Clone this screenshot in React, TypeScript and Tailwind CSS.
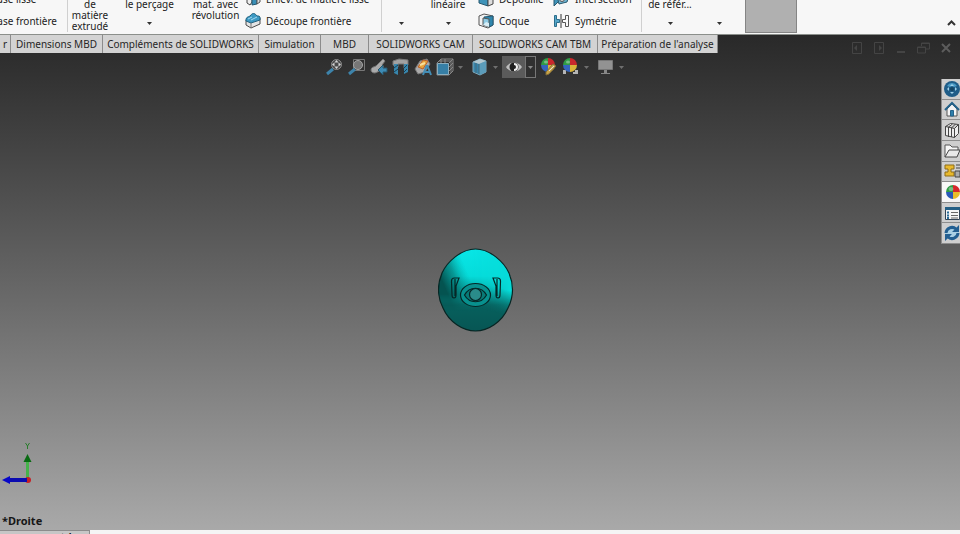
import type { ReactNode } from 'react'

const hudSep = <Caret className="fill-[#6f6f6f]" />

function Caret({ className }: { className: string }) {
  return (
    <svg width="5" height="3" viewBox="0 0 5 3" className={className}>
      <path d="M0 0h5L2.5 3z" />
    </svg>
  )
}

/* ===== Ribbon ===== */

function LargeButton({ lines, arrow, className }: { lines: string[]; arrow?: boolean; className: string }) {
  return (
    <button
      aria-label={lines.length ? undefined : 'Options'}
      className={`-mt-px flex shrink-0 flex-col items-center leading-[11px] ${arrow ? 'h-[26px]' : ''} ${className}`}
    >
      {lines.map(l => <span key={l} className="whitespace-nowrap">{l}</span>)}
      {arrow && <Caret className="mt-auto fill-[#333]" />}
    </button>
  )
}

function SmallButton({ icon, label }: { icon: ReactNode; label: string }) {
  return (
    <button className="flex h-[22px] shrink-0 items-center gap-[5px] whitespace-nowrap">
      {icon}
      <span>{label}</span>
    </button>
  )
}

function SmallColumn({ className, children }: { className: string; children: ReactNode }) {
  return (
    <div className={`flex h-[34px] shrink-0 flex-col items-start justify-end pb-0.5 ${className}`}>
      {children}
    </div>
  )
}

function LoftIcon() {
  return (
    <svg width="16" height="16" viewBox="0 0 16 16" className="shrink-0">
      <path d="M2 5l5-3v9l-2 3-3-2z" fill="#eee" stroke="#444" />
      <path d="M7 2l5 3v8l-5 1z" fill="#3a8fb7" stroke="#24566e" />
      <path d="M12 6l3-1v6l-3 2z" fill="#ddd" stroke="#555" />
    </svg>
  )
}

function BoundaryCutIcon() {
  return (
    <svg width="16" height="16" viewBox="0 0 16 16" className="shrink-0">
      <path d="M1 7l9-4 5 2v6l-9 4-5-3z" fill="#e4e4e4" stroke="#4b4b4b" />
      <path d="M1 6c1-3 4-2 5-4s4-2 5 0 3 0 4 2v3L6 10 1 8z" fill="#3d9ac4" stroke="#23627f" />
      <path d="M3 6l4-2M6 7l6-3" stroke="#a5d8ee" fill="none" />
      <path d="M6 10v5" stroke="#777" />
    </svg>
  )
}

function DraftIcon() {
  return (
    <svg width="16" height="16" viewBox="0 0 16 16" className="shrink-0">
      <path d="M1 4l9-2v13l-9-3z" fill="#3f93b8" stroke="#28586f" />
      <path d="M10 2l5 2v9l-5 2z" fill="#ddd" stroke="#444" />
    </svg>
  )
}

function ShellIcon() {
  return (
    <svg width="16" height="16" viewBox="0 0 16 16" className="shrink-0">
      <path d="M1 3l5-2 9 2v9l-5 3-9-3z" fill="#f2f2f2" stroke="#555" />
      <path d="M6 4l9-1v9l-4 2z" fill="#2f86ad" stroke="#225a75" />
      <path d="M5 5l6 1v8l-6-2z" fill="#8ecbe4" stroke="#555" />
      <path d="M5 12l3-3 3 1v4z" fill="#d8edf5" />
    </svg>
  )
}

function IntersectIcon() {
  return (
    <svg width="17" height="16" viewBox="0 0 17 16" className="shrink-0">
      <path d="M1 1h5v9l-5 5z" fill="#3f93b8" stroke="#28586f" />
      <path d="M4 5l12-1-2 7-8 2z" fill="#6cb5d3" stroke="#28586f" />
      <circle cx="9" cy="8" r="2.500" fill="#e5e5e5" stroke="#555" />
    </svg>
  )
}

function MirrorIcon() {
  return (
    <svg width="17" height="16" viewBox="0 0 17 16" className="shrink-0" fill="none">
      <path d="M1.500 2.500h2v4h3v3h-3v4h-2z" fill="#55a5c8" stroke="#2b6d8b" />
      <path d="M15.500 2.500h-3v4h-3v3h3v4h3z" fill="#fafafa" stroke="#555" />
      <path d="M8 1v14" stroke="#333" />
    </svg>
  )
}

function Ribbon() {
  return (
    <header className="flex h-[35px] shrink-0 items-start overflow-hidden border-b border-[#8b8f8b] bg-[#f7f7f7] text-[#1c1c1c]">
      <div className="flex h-8 w-[68px] shrink-0 justify-end border-r border-[#d0d0d0] pr-[10px]">
        <SmallColumn className="">
          <SmallButton icon={null} label="Bossage/Base lisse" />
          <SmallButton icon={null} label="Bossage/Base frontière" />
        </SmallColumn>
      </div>
      <LargeButton className="w-11" lines={['de', 'matière', 'extrudé']} />
      <LargeButton className="w-[75px]" lines={['le perçage']} arrow />
      <LargeButton className="w-[57px]" lines={['mat. avec', 'révolution']} />
      <div className="h-8 w-[138px] shrink-0 border-r border-[#d0d0d0]">
        <SmallColumn className="pl-px">
          <SmallButton icon={<LoftIcon />} label="Enlèv. de matière lisse" />
          <SmallButton icon={<BoundaryCutIcon />} label="Découpe frontière" />
        </SmallColumn>
      </div>
      <LargeButton className="w-[38px]" lines={[]} arrow />
      <LargeButton className="w-14" lines={['linéaire']} arrow />
      <SmallColumn className="w-[77px] pl-0.5">
        <SmallButton icon={<DraftIcon />} label="Dépouille" />
        <SmallButton icon={<ShellIcon />} label="Coque" />
      </SmallColumn>
      <div className="h-8 w-[89px] shrink-0 border-r border-[#d0d0d0]">
        <SmallColumn className="">
          <SmallButton icon={<IntersectIcon />} label="Intersection" />
          <SmallButton icon={<MirrorIcon />} label="Symétrie" />
        </SmallColumn>
      </div>
      <LargeButton className="w-14" lines={['de référ...']} arrow />
      <LargeButton className="w-[42px]" lines={[]} arrow />
      <div className="ml-[5px] h-[33px] w-[52px] shrink-0 border border-t-0 border-[#858585] bg-[#b0b0b0]" />
      <button aria-label="Réduire" className="mt-5 mr-1 ml-auto">
        <svg width="9" height="6" viewBox="0 0 9 6" fill="none" stroke="#333" strokeWidth="2">
          <path d="M1 5l3.500-3.500L8 5" />
        </svg>
      </button>
    </header>
  )
}

/* ===== Command tabs ===== */

const TABS = [
  { label: 'r', width: 'w-[11px]' },
  { label: 'Dimensions MBD', width: 'w-[92px]' },
  { label: 'Compléments de SOLIDWORKS', width: 'w-[156px]' },
  { label: 'Simulation', width: 'w-[62px]' },
  { label: 'MBD', width: 'w-[48px]' },
  { label: 'SOLIDWORKS CAM', width: 'w-[104px]' },
  { label: 'SOLIDWORKS CAM TBM', width: 'w-[125px]' },
  { label: "Préparation de l'analyse", width: 'w-[120px]' },
]

function WindowButtons() {
  return (
    <div className="mt-[7px] mr-2 ml-auto flex gap-[10px] text-[#444]">
      <button aria-label="Volet gauche">
        <svg width="12" height="12" viewBox="0 0 12 12" fill="none" stroke="currentColor">
          <path d="M1.500.5h9v11h-9z" /><path d="M6 3v6L3 6z" fill="currentColor" stroke="none" />
        </svg>
      </button>
      <button aria-label="Volet droit">
        <svg width="12" height="12" viewBox="0 0 12 12" fill="none" stroke="currentColor">
          <path d="M1.500.5h9v11h-9z" /><path d="M6 3v6l3-3z" fill="currentColor" stroke="none" />
        </svg>
      </button>
      <button aria-label="Réduire la fenêtre">
        <svg width="12" height="12" viewBox="0 0 12 12" stroke="currentColor" strokeWidth="2"><path d="M2 10h8" /></svg>
      </button>
      <button aria-label="Restaurer">
        <svg width="13" height="12" viewBox="0 0 13 12" fill="none" stroke="currentColor">
          <path d="M4.500 4V1h8v6H9M.5 5h8v6h-8zM4 1.500h8M0 5.500h9" />
        </svg>
      </button>
      <button aria-label="Fermer">
        <svg width="12" height="12" viewBox="0 0 12 12" stroke="#5c5c5c" strokeWidth="2"><path d="M2 2l8 8M10 2l-8 8" /></svg>
      </button>
    </div>
  )
}

/* ===== Heads-up toolbar ===== */

function Ball() {
  return (
    <svg width="14" height="14" viewBox="0 0 14 14">
      <path d="M7 7V0a7 7 0 0 0-7 7z" fill="#2f9c45" />
      <path d="M7 7V0a7 7 0 0 1 7 7z" fill="#d5282c" />
      <path d="M7 7H0a7 7 0 0 0 7 7z" fill="#2a59b8" />
      <path d="M7 7h7a7 7 0 0 1-7 7z" fill="#e9bd2a" />
      <ellipse cx="5" cy="4" rx="2.500" ry="2" fill="#fff" opacity=".35" />
    </svg>
  )
}

function HudButton({ label, children }: { label: string; children: ReactNode }) {
  return (
    <button aria-label={label} className="shrink-0">
      <svg width="18" height="18" viewBox="0 0 18 18" fill="none">{children}</svg>
    </button>
  )
}

function ColorBall() {
  return (
    <>
      <path d="M8 7V0a7 7 0 0 0-7 7z" fill="#2f9c45" />
      <path d="M8 7V0a7 7 0 0 1 7 7z" fill="#c9282c" />
      <path d="M8 7H1a7 7 0 0 0 7 7z" fill="#3465bd" />
      <path d="M8 7h7a7 7 0 0 1-7 7z" fill="#d9b53a" />
      <ellipse cx="6" cy="4" rx="2" ry="1.500" fill="#fff" opacity=".35" />
    </>
  )
}

function HudToolbar() {
  return (
    <div className="mt-[3px] mb-px flex h-[22px] shrink-0 items-center justify-center pr-[10px]">
      <div className="flex items-center gap-1">
        <HudButton label="Zoom au mieux">
          <path d="M1 16l6-5" stroke="#3d83aa" strokeWidth="3" />
          <circle cx="10.500" cy="6.500" r="5" fill="#4a4a4a" stroke="#8c8c8c" />
          <path d="M10.500 2l2 2.500h-4zM10.500 11l2-2.500h-4zM6 6.500l2.500-2v4zM15 6.500l-2.500-2v4z" fill="#d5d5d5" />
        </HudButton>
        <HudButton label="Zoom fenêtre">
          <path d="M5.500 1.500h11v11h-11z" stroke="#777" />
          <path d="M1 16l6-5" stroke="#3d83aa" strokeWidth="3" />
          <circle cx="10" cy="7" r="4.500" fill="#777" stroke="#a5a5a5" />
        </HudButton>
        <HudButton label="Vue précédente">
          <path d="M1 12c0-3 3-3 5-4l7-7 2 2-3 4c2 1 2 3 0 5l-7 3c-2 0-4-1-4-3z" fill="#aaa" stroke="#777" />
          <path d="M17 10h-4V7l-5 5 5 5v-3h4z" fill="#3d8bb5" stroke="#28566c" />
        </HudButton>
        <HudButton label="Vue en coupe">
          <path d="M1 3l6-2 9 1v5l-4 3V6H6v3L1 7z" fill="#a2a2a2" stroke="#777" />
          <path d="M2 6h4v11l-4-2zM12 6h4v8l-4 2z" fill="#3886ad" />
          <path d="M2 10l4-3M2 14l4-3M12 10l3-3M12 14l3-3" stroke="#163f54" />
        </HudButton>
        <HudButton label="Vues d'annotations dynamiques">
          <path d="M1 11l5-8 7-2 3 5-5 8-7 2z" fill="#aaa" stroke="#777" />
          <path d="M4 9l5-7 5 1-5 8z" fill="#e7a33b" stroke="#b95e2a" />
          <path d="M6 7l5-2" stroke="#f7df9b" strokeWidth="2" />
          <path d="M9 17l3.500-9h1l3.500 9M11 14h5" stroke="#438db5" strokeWidth="2" />
        </HudButton>
        <HudButton label="Orientation de la vue">
          <path d="M1 5l4-4h12v12l-4 4H1zM13 5l4-4M5 1v4M9 1v4M13 9l4-4M13 13l4-4M3 3h12v12" stroke="#888" />
          <path d="M1.500 5.500h11v11h-11z" fill="#367fa6" stroke="#8caebe" />
        </HudButton>
      </div>
      <span className="ml-1">{hudSep}</span>
      <span className="ml-2 flex">
        <HudButton label="Style d'affichage">
          <path d="M2 4l7-3 6 2v11l-6 3-7-3z" fill="#3784aa" stroke="#7da8bc" />
          <path d="M8 6l7-3v11l-7 3z" fill="#5b9cba" />
          <path d="M2 4l7-3 6 2-7 3z" fill="#b5c8d0" />
          <path d="M8 6v10M5 5v10" stroke="#466b7d" />
        </HudButton>
      </span>
      <span className="ml-1">{hudSep}</span>
      <div className="ml-1 flex h-[22px] items-center bg-[#5b5b5b] pl-[3px]">
        <HudButton label="Cacher/Montrer les éléments">
          <path d="M1 9c4-6 12-6 16 0-4 6-12 6-16 0z" fill="#bdbdbd" />
          <circle cx="9" cy="9" r="4.500" fill="#202020" />
          <path d="M9 5a4 4 0 0 1 0 8z" fill="#eee" /><circle cx="9" cy="9" r="2" fill="#202020" />
        </HudButton>
        <button
          aria-label="Options d'affichage"
          className="ml-0.5 flex h-[22px] w-[11px] items-center justify-center border border-[#777] bg-[#303030]"
        >
          <Caret className="fill-[#8a8a8a]" />
        </button>
      </div>
      <div className="ml-1 flex items-center gap-1">
        <HudButton label="Editer l'apparence">
          <ColorBall />
          <path d="M6 14l7-8 3 2-7 8-3 1z" fill="#c9a447" stroke="#806c3b" />
          <path d="M9 13l5-5" stroke="#ddd" />
        </HudButton>
        <HudButton label="Appliquer une scène">
          <path d="M1 12h5v4H1zM11 12h5v4h-5z" fill="#b5b5b5" /><path d="M4 12h3v4H4zM11 12h2v2h-2z" fill="#333" />
          <ColorBall />
        </HudButton>
        <span>{hudSep}</span>
      </div>
      <span className="ml-2 flex">
        <HudButton label="Paramètres de la vue">
          <path d="M1.500 2.500h14v9h-14z" fill="#929292" stroke="#777" />
          <path d="M7 12h3v3h3v1H4v-1h3z" fill="#888" />
        </HudButton>
      </span>
      <span className="ml-1">{hudSep}</span>
    </div>
  )
}

/* ===== Task pane ===== */

const PANE = [
  {
    label: 'Ressources SOLIDWORKS',
    icon: <><circle cx="8" cy="8" r="8" fill="#1f5d88" /><path d="M8 2a6 6 0 0 1 5 3l-3 1-2-1-2 1-3-1a6 6 0 0 1 5-3z" fill="#4a9bc6" /><path d="M8 3l2 2H6zM8 13l2-2H6zM3 8l2-2v4zM13 8l-2-2v4z" fill="#9fd0e8" /><circle cx="8" cy="8" r="2" fill="#164563" /></>,
  },
  {
    label: 'Accueil',
    icon: <><path d="M3 8v7h10V8L8 3z" fill="#f4f4f4" stroke="#555" /><path d="M1 9l7-7 7 7" stroke="#23628a" strokeWidth="2" /><path d="M6.500 9.500h3V15h-3z" fill="#2c7eaa" stroke="#23628a" /></>,
  },
  {
    label: 'Bibliothèque de conception',
    icon: <path d="M1.500 4.500l5-3 8 1v9l-4 4-9-2zM1.500 4.500l9 2 4-4M4.500 5v10M7.500 6v9M10.500 6.500v9M4.500 5l4-3M7.500 6l4-4" fill="#eee" stroke="#444" />,
  },
  {
    label: 'Explorateur de fichiers',
    icon: <><path d="M1 14V2h5l2 2h6v3" fill="#f8f8f8" stroke="#555" /><path d="M1 14l4-7h11l-3 7z" fill="#e9e9e9" stroke="#444" /></>,
  },
  {
    label: 'Palette de vues',
    icon: <><path d="M1 2h9v4H7v3h3v4H1V9h3V6H1z" fill="#e9b92c" stroke="#8d6c18" /><path d="M12 2h4M12 5h4M11 8h5v6h-5z" stroke="#444" fill="#aaa" /></>,
  },
  { label: 'Apparences, scènes et décalques', active: true, icon: null },
  {
    label: 'Propriétés personnalisées',
    icon: <><path d="M1.500 2.500h14v12h-14z" fill="#f5f5f5" stroke="#345" /><path d="M1 2h15v3H1z" fill="#245f85" /><path d="M3 7.500h2M3 10.500h2M3 13h2" stroke="#286b98" strokeWidth="2" /><path d="M7 7.500h7M7 10.500h7M7 13h7" stroke="#666" /></>,
  },
  {
    label: 'Forum SOLIDWORKS',
    icon: <><circle cx="8" cy="8" r="7" fill="#a9d0e4" /><path d="M2 8a6 6 0 0 1 10-4M14 8a6 6 0 0 1-10 4" stroke="#235f91" strokeWidth="3" /><path d="M8 7h7V0zM8 9H1v7z" fill="#235f91" /></>,
  },
]

function TaskPane() {
  return (
    <aside className="grid h-[165px] w-[19px] grid-rows-8 gap-px self-start justify-self-end bg-[#8d8d8d] pb-px pl-px [grid-area:1/1]">
      {PANE.map(p => (
        <button
          key={p.label}
          aria-label={p.label}
          className={`flex items-center justify-end ${p.active ? 'bg-[#f8f8f8]' : 'bg-[#cfcfcf]'}`}
        >
          {p.icon ? <svg width="16" height="16" viewBox="0 0 16 16" fill="none">{p.icon}</svg> : <Ball />}
        </button>
      ))}
    </aside>
  )
}

/* ===== 3D view ===== */

const SHELL = 'M37.500 1C52 1 66 14 71 25c5 12 5 23-1 35-6 14-20 23-32.500 23S11 74 5 60C-1 48-1 37 4 25 9 14 23 1 37.500 1z'

function Model() {
  return (
    <svg width="76" height="84" viewBox="0 0 76 84" fill="none">
      <defs>
        <linearGradient id="shellTop" x1="0" y1="0" x2="0" y2="1">
          <stop offset="0" stopColor="#08e6e6" />
          <stop offset=".33" stopColor="#06dcda" />
          <stop offset=".5" stopColor="#07a5a2" />
          <stop offset=".68" stopColor="#07605d" />
          <stop offset="1" stopColor="#075654" />
        </linearGradient>
        <linearGradient id="shellLeft" x1=".08" y1=".45" x2=".4" y2=".3">
          <stop offset="0" stopColor="#045350" />
          <stop offset=".5" stopColor="#067b78" stopOpacity=".7" />
          <stop offset="1" stopColor="#05a8a5" stopOpacity="0" />
        </linearGradient>
        <linearGradient id="shellRight" x1=".85" y1=".48" x2=".78" y2=".78">
          <stop offset="0" stopColor="#06dcd9" />
          <stop offset=".5" stopColor="#07a09d" stopOpacity=".6" />
          <stop offset="1" stopColor="#067471" stopOpacity="0" />
        </linearGradient>
        <linearGradient id="sideFade" x1=".45" y1="0" x2=".95" y2="0">
          <stop offset="0" stopColor="#000" />
          <stop offset="1" stopColor="#fff" />
        </linearGradient>
        <linearGradient id="leftFade" x1="0" y1=".55" x2="0" y2=".75">
          <stop offset="0" stopColor="#fff" />
          <stop offset="1" stopColor="#000" />
        </linearGradient>
        <mask id="rightSide"><path d="M0 0h76v84H0z" fill="url(#sideFade)" /></mask>
        <mask id="leftSide"><path d="M0 0h76v84H0z" fill="url(#leftFade)" /></mask>
      </defs>
      <path d={SHELL} fill="url(#shellTop)" />
      <path d={SHELL} fill="url(#shellLeft)" mask="url(#leftSide)" />
      <path d={SHELL} fill="url(#shellRight)" mask="url(#rightSide)" />
      <path d={SHELL} stroke="#082523" strokeWidth="1.200" />
      <g stroke="#062726" strokeWidth="1.200">
        <ellipse cx="37.500" cy="47" rx="15" ry="11.500" fill="#08918e" />
        <path d="M26.500 47c5-9 17-9 22 0-5 9-17 9-22 0z" fill="#087a77" />
        <circle cx="37.500" cy="46.500" r="6" fill="#2a8c8a" />
        <path d="M13.500 33q0-3 3-3h4.500l-3 8v9q0 3-2 3t-2-3zM17 31v17" />
        <path d="M62.500 33q0-3-3-3H55l3 8v9q0 3 2 3t2-3zM59 31v17" />
      </g>
    </svg>
  )
}

function Triad() {
  return (
    <svg width="40" height="48" viewBox="0 0 40 48">
      <path d="M25.500 2l2 3 2-3M27.500 5v3" stroke="#287d2b" fill="none" />
      <path d="M26 20h3v19h-3z" fill="#46b34a" />
      <path d="M27.500 13l4 8h-8z" fill="#096b12" />
      <circle cx="28" cy="39" r="3" fill="#c71f25" />
      <path d="M10 37h17v4H10z" fill="#0b0bb0" />
      <path d="M2 39l8-4v8z" fill="#0707c8" />
    </svg>
  )
}

export default function App() {
  return (
    <div className="flex h-screen flex-col overflow-hidden bg-[#f7f7f7] font-['Noto_Sans',sans-serif] text-[10px]">
      <Ribbon />
      <main className="flex min-h-0 flex-1 flex-col bg-linear-to-b from-[#292929] to-[#a9a9a9]">
        <div className="flex h-[18px] shrink-0 items-start">
          <nav className="flex text-[#262626]">
            {TABS.map(t => (
              <button
                key={t.label}
                className={`h-[18px] shrink-0 border-r border-[#8c8c8c] bg-[#d3d3d3] text-center leading-[18px] whitespace-nowrap ${t.width}`}
              >
                {t.label}
              </button>
            ))}
          </nav>
          <WindowButtons />
        </div>
        <HudToolbar />
        <div className="grid min-h-0 flex-1">
          <div className="place-self-center pr-[9px] pb-[30px] [grid-area:1/1]">
            <Model />
          </div>
          <div className="self-end justify-self-start [grid-area:1/1]">
            <Triad />
            <p className="mt-[23px] ml-0.5 text-[11px] leading-[18px] font-bold text-[#161616]">*Droite</p>
          </div>
          <TaskPane />
        </div>
      </main>
      <footer className="flex h-1 shrink-0 overflow-hidden bg-[#f5f5f5]">
        <button className="flex h-4 w-[90px] shrink-0 justify-end border-t border-r border-[#8c8c8c] bg-[#c6c6c6] pr-4 leading-3 whitespace-nowrap">
          Étude de mouvement 1
        </button>
      </footer>
    </div>
  )
}
